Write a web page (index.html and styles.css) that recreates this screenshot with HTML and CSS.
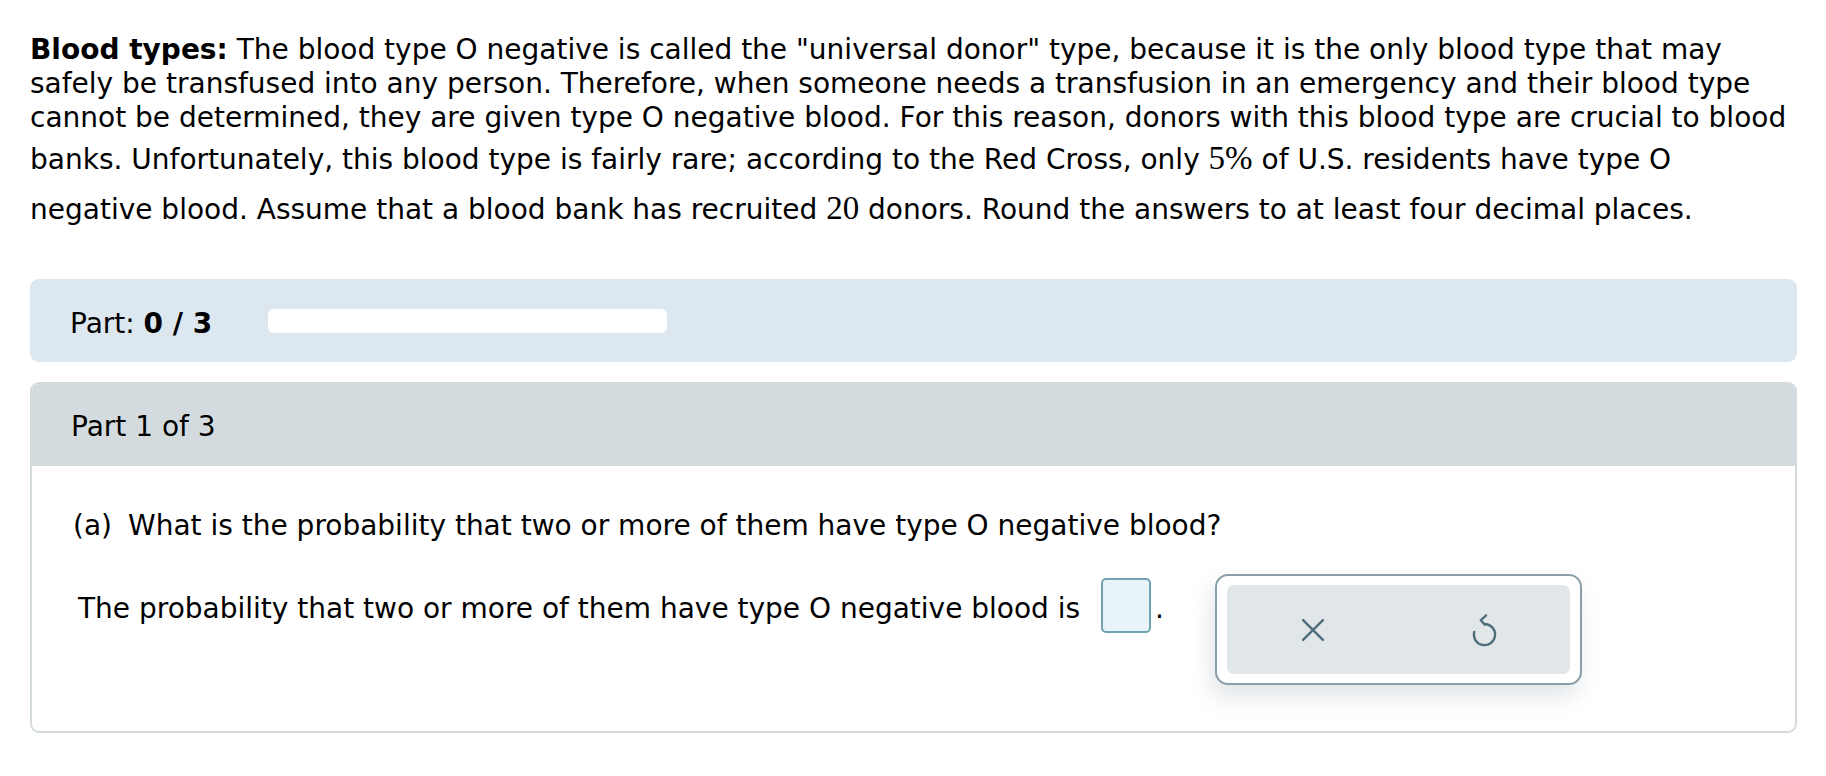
FILE: index.html
```html
<!DOCTYPE html>
<html lang="en">
<head>
<meta charset="utf-8">
<title>Blood types</title>
<link rel="stylesheet" href="styles.css">
</head>
<body>
<div class="page">
  <p class="intro"><b>Blood types:</b> The blood type O negative is called the "universal donor" type, because it is the only blood type that may safely be transfused into any person. Therefore, when someone needs a transfusion in an emergency and their blood type cannot be determined, they are given type O negative blood. For this reason, donors with this blood type are crucial to blood banks. Unfortunately, this blood type is fairly rare; according to the Red Cross, only <span class="math">5%</span> of U.S. residents have type O negative blood. Assume that a blood bank has recruited <span class="math">20</span> donors. Round the answers to at least four decimal places.</p>

  <div class="progress-panel">
    <span class="progress-label">Part: <b>0 / 3</b></span>
    <div class="progress-bar"></div>
  </div>

  <div class="card">
    <div class="card-header">Part 1 of 3</div>
    <div class="card-body">
      <p class="question"><span class="qlabel">(a)</span>What is the probability that two or more of them have type O negative blood?</p>
      <div class="answer-row">
        <p class="sentence">The probability that two or more of them have type O negative blood is <span class="answer-box"></span><span class="period">.</span></p>
        <div class="toolbar">
          <div class="toolbar-inner">
            <button class="tool" type="button" aria-label="Clear">
              <svg class="icon-x" viewBox="0 0 24 24" width="28" height="28">
                <path d="M3.5 3.5 L20.5 20.5 M20.5 3.5 L3.5 20.5" fill="none" stroke="#4f6e7b" stroke-width="2.1" stroke-linecap="round"/>
              </svg>
            </button>
            <button class="tool" type="button" aria-label="Undo">
              <svg class="icon-undo" viewBox="0 0 26 34" width="29" height="38">
                <path d="M13 12.5 A9.5 9.5 0 1 1 3.8 19.6" fill="none" stroke="#4f6e7b" stroke-width="2.1" stroke-linecap="round"/>
                <path d="M14.4 4.8 L9.6 9.2 L13.2 13" fill="none" stroke="#4f6e7b" stroke-width="2.1" stroke-linecap="round" stroke-linejoin="round"/>
              </svg>
            </button>
          </div>
        </div>
      </div>
    </div>
  </div>
</div>
</body>
</html>
```

FILE: styles.css
```css
html, body {
  margin: 0;
  padding: 0;
  background: #ffffff;
}

body {
  font-family: "DejaVu Sans", Verdana, sans-serif;
  font-size: 28px;
  line-height: 34px;
  color: #000000;
}

.page {
  padding: 33px 29px 0 30px;
}

.intro {
  margin: 0;
}

.intro b {
  font-weight: bold;
}

.math {
  display: inline-block;
  font-family: "Liberation Serif", "Times New Roman", serif;
  font-size: 33px;
  line-height: 32px;
  padding: 7px 0 11px;
}

.progress-panel {
  margin-top: 44px;
  height: 83px;
  background: #dce7f0;
  border-radius: 9px;
  display: flex;
  align-items: center;
  padding: 0 36px 0 40px;
}

.progress-label {
  margin-top: 7px;
}

.progress-label b {
  font-weight: bold;
}

.progress-bar {
  width: 399px;
  height: 24px;
  background: #ffffff;
  border-radius: 6px;
  margin-left: 56px;
}

.card {
  margin-top: 20px;
  border: 2px solid #d3dbdf;
  border-radius: 9px;
  overflow: hidden;
  background: #ffffff;
}

.card-header {
  height: 78px;
  padding: 4px 39px 0;
  background: #d3dbdf;
  display: flex;
  align-items: center;
}

.card-body {
  padding: 43px 36px 46px 41px;
}

.question {
  margin: 0;
}

.qlabel {
  margin-right: 16px;
}

.answer-row {
  margin-top: 31px;
  display: flex;
  align-items: flex-start;
}

.sentence {
  margin: 4px 0 0 5px;
  white-space: nowrap;
}

.answer-box {
  display: inline-block;
  width: 46px;
  height: 51px;
  border: 2px solid #6fa2b2;
  border-radius: 5px;
  background: #e8f4f7;
  margin-left: 12px;
  vertical-align: -15px;
}

.period {
  margin-left: 4px;
}

.toolbar {
  margin-left: 51px;
  width: 343px;
  padding: 9px 10px 9px 10px;
  border: 2px solid #8a9fa9;
  border-radius: 13px;
  background: #ffffff;
  box-shadow: -4px 12px 22px rgba(70, 95, 110, 0.16);
}

.toolbar-inner {
  height: 89px;
  background: #e1e6e9;
  border-radius: 7px;
  display: flex;
}

.tool {
  flex: 1;
  border: none;
  background: transparent;
  padding: 0;
  margin: 0;
  display: flex;
  align-items: center;
  justify-content: center;
  cursor: pointer;
}

.icon-undo {
  margin-top: -2px;
}
```
